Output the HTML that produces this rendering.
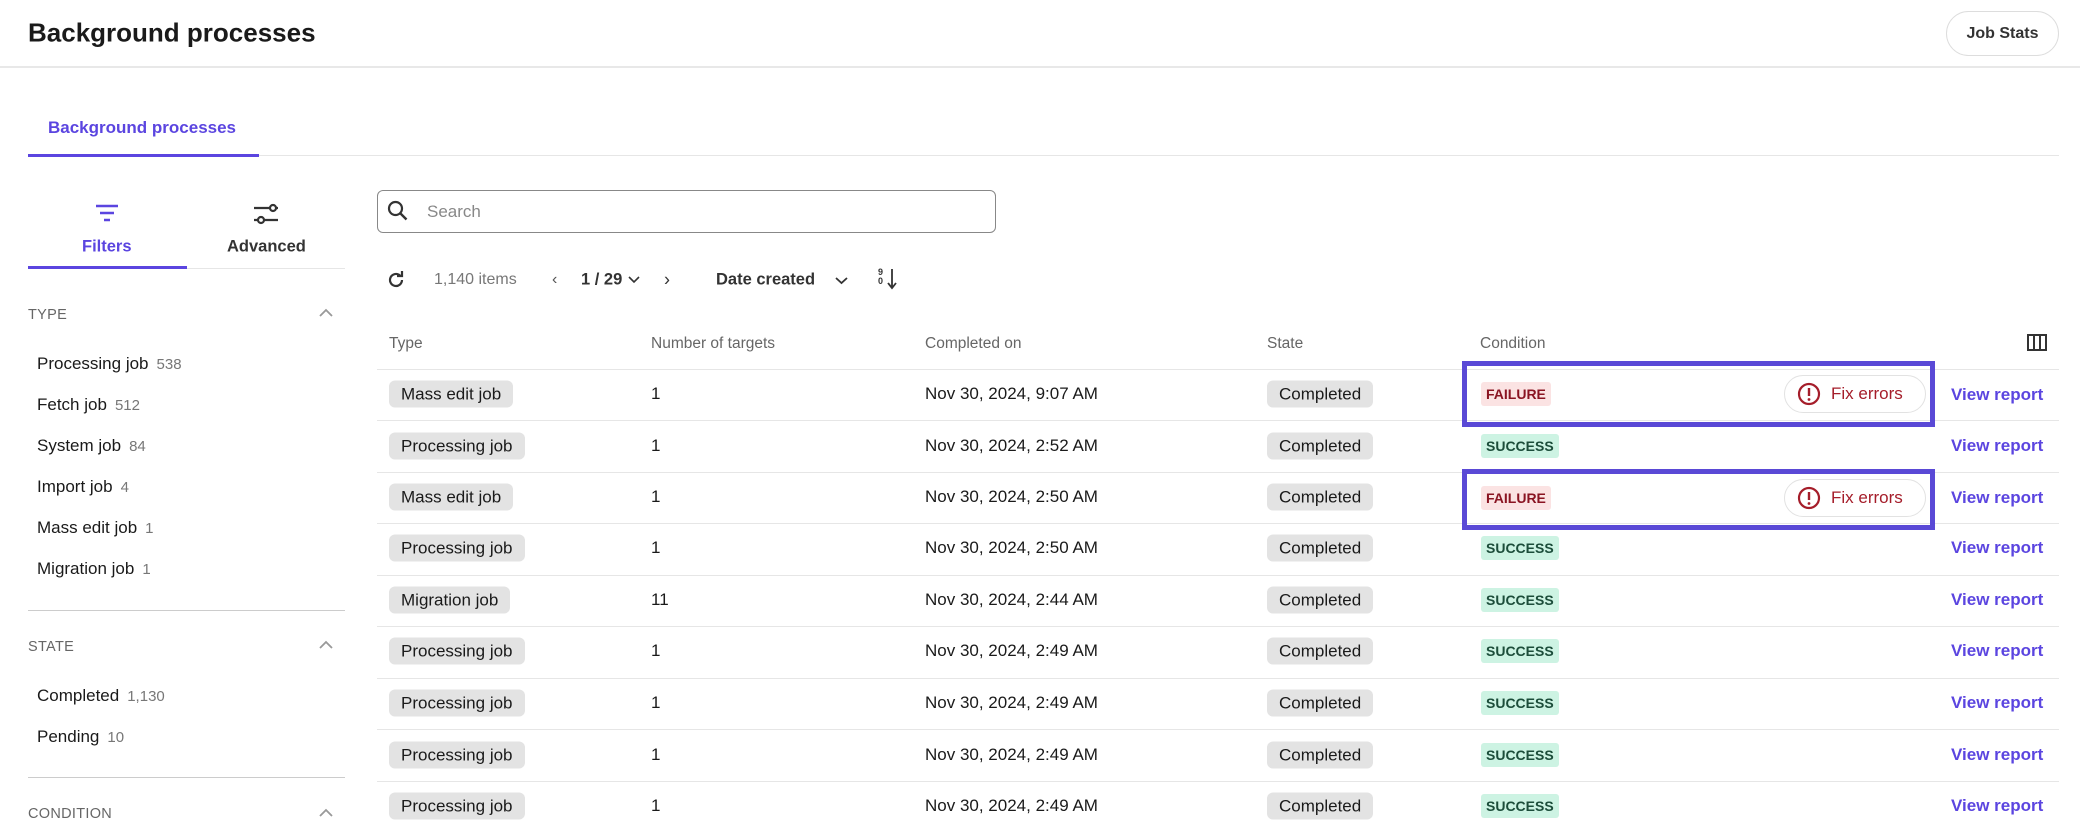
<!DOCTYPE html>
<html><head><meta charset="utf-8"><style>
*{box-sizing:border-box;margin:0;padding:0}
body{width:2080px;height:831px;overflow:hidden;background:#fff;font-family:"Liberation Sans",sans-serif;color:#1a1a1a;position:relative}
.a{position:absolute;white-space:nowrap}
.c{transform:translateY(-50%)}
.chip{background:#e3e3e3;border-radius:6px;padding:0 12px;height:27px;line-height:27px;font-size:17px}
.hd{font-size:15.5px;color:#666}
.line{position:absolute;height:1px;background:#e6e6e6}
.cnt{color:#777;font-size:15px;margin-left:8px}
.fi{font-size:17px}
.sec{font-size:14.5px;color:#666;letter-spacing:.3px}
.vr{color:#5b45e0;font-size:17px;font-weight:bold}
.fail{background:#fbe3e3;color:#8a1422;font-weight:bold;font-size:14px;height:24px;line-height:24px;padding:0 5px;border-radius:3px}
.succ{background:#cdf3e3;color:#1c4d3a;font-weight:bold;font-size:14px;height:24px;line-height:24px;padding:0 5px;border-radius:3px}
.fix{border:1.5px solid #e2e2e2;border-radius:19px;height:38px;width:142px;color:#a51d2a;font-size:17px;display:flex;align-items:center;padding-left:12px;gap:10px;background:#fff}
.hl{position:absolute;border:5px solid #5a49d6;left:1462px;width:473px}
</style></head><body>
<div class="a c" style="left:28px;top:33px;font-size:26px;font-weight:bold">Background processes</div>
<div class="a" style="left:1946px;top:11px;width:113px;height:45px;border:1.5px solid #ddd;border-radius:23px;font-size:16px;font-weight:bold;display:flex;align-items:center;justify-content:center;color:#333">Job Stats</div>
<div class="line" style="left:0;top:66px;width:2080px;height:2px;background:#e8e8e8"></div>

<div class="a c" style="left:48px;top:128px;color:#5b45e0;font-weight:bold;font-size:17px">Background processes</div>
<div class="line" style="left:28px;top:155px;width:2031px"></div>
<div class="a" style="left:28px;top:154px;width:231px;height:3px;background:#5b45e0"></div>

<svg class="a" style="left:94px;top:204px" width="26" height="18" viewBox="0 0 26 18"><path d="M2 2h22M6 9h14M10 16h6" stroke="#5b45e0" stroke-width="2.4"/></svg>
<svg class="a" style="left:252px;top:201px" width="28" height="26" viewBox="0 0 28 26"><g stroke="#333" stroke-width="2.2" fill="none"><path d="M2 7h16M24 7h2M2 19h4M12 19h14"/><circle cx="21" cy="7" r="3"/><circle cx="9" cy="19" r="3"/></g></svg>
<div class="a c" style="left:82px;top:247px;color:#5b45e0;font-weight:bold;font-size:16.5px">Filters</div>
<div class="a c" style="left:227px;top:247px;font-weight:bold;font-size:16.5px;color:#333">Advanced</div>
<div class="line" style="left:28px;top:268px;width:317px"></div>
<div class="a" style="left:28px;top:266px;width:159px;height:3px;background:#5b45e0"></div>

<div class="a c sec" style="left:28px;top:315px">TYPE</div>
<svg class="a" style="left:318px;top:308px" width="16" height="10"><path d="M2 8l6-6 6 6" stroke="#999" stroke-width="1.8" fill="none"/></svg>
<div class="a c fi" style="left:37px;top:364px">Processing job<span class="cnt">538</span></div>
<div class="a c fi" style="left:37px;top:405px">Fetch job<span class="cnt">512</span></div>
<div class="a c fi" style="left:37px;top:446px">System job<span class="cnt">84</span></div>
<div class="a c fi" style="left:37px;top:487px">Import job<span class="cnt">4</span></div>
<div class="a c fi" style="left:37px;top:528px">Mass edit job<span class="cnt">1</span></div>
<div class="a c fi" style="left:37px;top:569px">Migration job<span class="cnt">1</span></div>
<div class="line" style="left:28px;top:610px;width:317px;background:#ccc"></div>
<div class="a c sec" style="left:28px;top:647px">STATE</div>
<svg class="a" style="left:318px;top:640px" width="16" height="10"><path d="M2 8l6-6 6 6" stroke="#999" stroke-width="1.8" fill="none"/></svg>
<div class="a c fi" style="left:37px;top:696px">Completed<span class="cnt">1,130</span></div>
<div class="a c fi" style="left:37px;top:737px">Pending<span class="cnt">10</span></div>
<div class="line" style="left:28px;top:777px;width:317px;background:#ccc"></div>
<div class="a c sec" style="left:28px;top:814px">CONDITION</div>
<svg class="a" style="left:318px;top:808px" width="16" height="10"><path d="M2 8l6-6 6 6" stroke="#999" stroke-width="1.8" fill="none"/></svg>

<div class="a" style="left:377px;top:190px;width:619px;height:43px;border:1.5px solid #888;border-radius:6px"></div>
<svg class="a" style="left:386px;top:199px" width="24" height="24" viewBox="0 0 24 24"><circle cx="9.5" cy="9.5" r="6.5" stroke="#333" stroke-width="2.2" fill="none"/><path d="M14.5 14.5l6 6" stroke="#333" stroke-width="2.4"/></svg>
<div class="a c" style="left:427px;top:212px;font-size:17px;color:#888">Search</div>

<svg class="a" style="left:386px;top:270px" width="20" height="20" viewBox="0 0 20 20"><path d="M16 10a6 6 0 1 1-2-4.5" stroke="#333" stroke-width="2.2" fill="none"/><path d="M11 4h5V-1" stroke="#333" stroke-width="2.2" fill="none" transform="translate(0,2)"/></svg>
<div class="a c" style="left:434px;top:280px;font-size:16px;color:#777">1,140 items</div>
<div class="a c" style="left:552px;top:280px;font-size:16px;color:#555">‹</div>
<div class="a c" style="left:581px;top:280px;font-size:16.5px;font-weight:bold;color:#333">1 / 29</div>
<svg class="a" style="left:628px;top:275px" width="12" height="9"><path d="M1 2l5 5 5-5" stroke="#333" stroke-width="1.6" fill="none"/></svg>
<div class="a c" style="left:664px;top:280px;font-size:18px;color:#333">›</div>
<div class="a c" style="left:716px;top:280px;font-size:16.5px;font-weight:bold;color:#333">Date created</div>
<svg class="a" style="left:835px;top:276px" width="13" height="9"><path d="M1 2l5.5 5 5.5-5" stroke="#333" stroke-width="1.8" fill="none"/></svg>
<div class="a" style="left:878px;top:268px;font-size:9px;line-height:9px;font-weight:bold;color:#333">9<br>0</div>
<svg class="a" style="left:887px;top:268px" width="10" height="22"><path d="M5 1v18M1 15l4 5 4-5" stroke="#333" stroke-width="1.8" fill="none"/></svg>

<div class="a c hd" style="left:389px;top:344px">Type</div>
<div class="a c hd" style="left:651px;top:344px">Number of targets</div>
<div class="a c hd" style="left:925px;top:344px">Completed on</div>
<div class="a c hd" style="left:1267px;top:344px">State</div>
<div class="a c hd" style="left:1480px;top:344px">Condition</div>
<svg class="a" style="left:2027px;top:334px" width="20" height="17"><rect x="1" y="1" width="18" height="15" stroke="#333" stroke-width="2" fill="none"/><path d="M7 1v15M13 1v15" stroke="#333" stroke-width="2"/></svg>

<div class="line" style="left:377px;top:369px;width:1682px"></div>
<div class="line" style="left:377px;top:420px;width:1682px"></div>
<div class="line" style="left:377px;top:472px;width:1682px"></div>
<div class="line" style="left:377px;top:523px;width:1682px"></div>
<div class="line" style="left:377px;top:575px;width:1682px"></div>
<div class="line" style="left:377px;top:626px;width:1682px"></div>
<div class="line" style="left:377px;top:678px;width:1682px"></div>
<div class="line" style="left:377px;top:729px;width:1682px"></div>
<div class="line" style="left:377px;top:781px;width:1682px"></div>

<div class="a c chip" style="left:389px;top:394px">Mass edit job</div><div class="a c fi" style="left:651px;top:394px">1</div><div class="a c fi" style="left:925px;top:394px">Nov 30, 2024, 9:07 AM</div><div class="a c chip" style="left:1267px;top:394px">Completed</div><div class="a c fail" style="left:1481px;top:394px">FAILURE</div><div class="a c fix" style="left:1784px;top:394px"><svg width="24" height="24"><circle cx="12" cy="12" r="10" stroke="#a51d2a" stroke-width="2.2" fill="none"/><path d="M12 6v8" stroke="#a51d2a" stroke-width="2.4"/><circle cx="12" cy="17.5" r="1.4" fill="#a51d2a"/></svg>Fix errors</div><div class="a c vr" style="left:1951px;top:395px">View report</div>
<div class="hl" style="top:361px;height:66px"></div>

<div class="a c chip" style="left:389px;top:446px">Processing job</div><div class="a c fi" style="left:651px;top:446px">1</div><div class="a c fi" style="left:925px;top:446px">Nov 30, 2024, 2:52 AM</div><div class="a c chip" style="left:1267px;top:446px">Completed</div><div class="a c succ" style="left:1481px;top:446px">SUCCESS</div><div class="a c vr" style="left:1951px;top:446px">View report</div>

<div class="a c chip" style="left:389px;top:497px">Mass edit job</div><div class="a c fi" style="left:651px;top:497px">1</div><div class="a c fi" style="left:925px;top:497px">Nov 30, 2024, 2:50 AM</div><div class="a c chip" style="left:1267px;top:497px">Completed</div><div class="a c fail" style="left:1481px;top:498px">FAILURE</div><div class="a c fix" style="left:1784px;top:498px"><svg width="24" height="24"><circle cx="12" cy="12" r="10" stroke="#a51d2a" stroke-width="2.2" fill="none"/><path d="M12 6v8" stroke="#a51d2a" stroke-width="2.4"/><circle cx="12" cy="17.5" r="1.4" fill="#a51d2a"/></svg>Fix errors</div><div class="a c vr" style="left:1951px;top:498px">View report</div>
<div class="hl" style="top:469px;height:61px"></div>

<div class="a c chip" style="left:389px;top:548px">Processing job</div><div class="a c fi" style="left:651px;top:548px">1</div><div class="a c fi" style="left:925px;top:548px">Nov 30, 2024, 2:50 AM</div><div class="a c chip" style="left:1267px;top:548px">Completed</div><div class="a c succ" style="left:1481px;top:548px">SUCCESS</div><div class="a c vr" style="left:1951px;top:548px">View report</div>

<div class="a c chip" style="left:389px;top:600px">Migration job</div><div class="a c fi" style="left:651px;top:600px">11</div><div class="a c fi" style="left:925px;top:600px">Nov 30, 2024, 2:44 AM</div><div class="a c chip" style="left:1267px;top:600px">Completed</div><div class="a c succ" style="left:1481px;top:600px">SUCCESS</div><div class="a c vr" style="left:1951px;top:600px">View report</div>

<div class="a c chip" style="left:389px;top:651px">Processing job</div><div class="a c fi" style="left:651px;top:651px">1</div><div class="a c fi" style="left:925px;top:651px">Nov 30, 2024, 2:49 AM</div><div class="a c chip" style="left:1267px;top:651px">Completed</div><div class="a c succ" style="left:1481px;top:651px">SUCCESS</div><div class="a c vr" style="left:1951px;top:651px">View report</div>

<div class="a c chip" style="left:389px;top:703px">Processing job</div><div class="a c fi" style="left:651px;top:703px">1</div><div class="a c fi" style="left:925px;top:703px">Nov 30, 2024, 2:49 AM</div><div class="a c chip" style="left:1267px;top:703px">Completed</div><div class="a c succ" style="left:1481px;top:703px">SUCCESS</div><div class="a c vr" style="left:1951px;top:703px">View report</div>

<div class="a c chip" style="left:389px;top:755px">Processing job</div><div class="a c fi" style="left:651px;top:755px">1</div><div class="a c fi" style="left:925px;top:755px">Nov 30, 2024, 2:49 AM</div><div class="a c chip" style="left:1267px;top:755px">Completed</div><div class="a c succ" style="left:1481px;top:755px">SUCCESS</div><div class="a c vr" style="left:1951px;top:755px">View report</div>

<div class="a c chip" style="left:389px;top:806px">Processing job</div><div class="a c fi" style="left:651px;top:806px">1</div><div class="a c fi" style="left:925px;top:806px">Nov 30, 2024, 2:49 AM</div><div class="a c chip" style="left:1267px;top:806px">Completed</div><div class="a c succ" style="left:1481px;top:806px">SUCCESS</div><div class="a c vr" style="left:1951px;top:806px">View report</div>
</body></html>
